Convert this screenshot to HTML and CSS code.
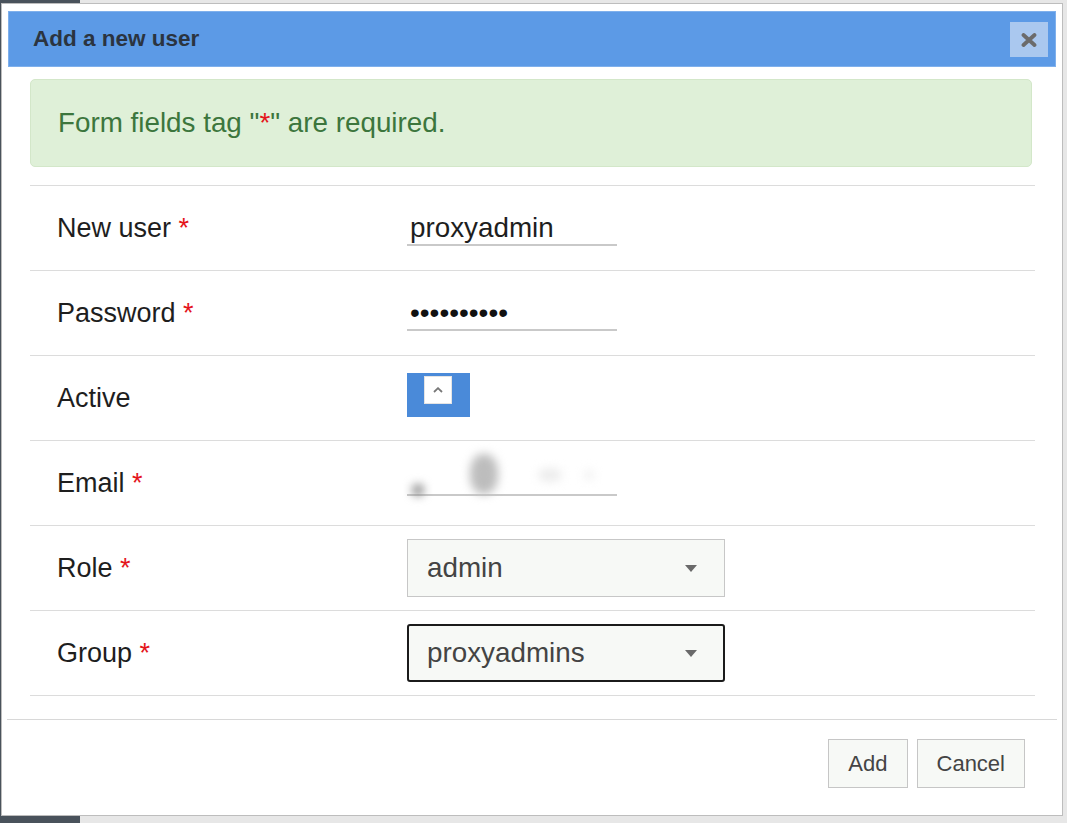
FILE: index.html
```html
<!DOCTYPE html>
<html>
    <head>
        <title>Add a new user</title>
        <link rel="stylesheet" href="styles.css">
    </head>
    <body>
        <div class="backdrop">
            <div class="sidebar"></div>
            <div class="main"></div>
        </div>

        <div class="dialog">
            <div class="dialog-head">
                <span class="dialog-title">Add a new user</span>
                <button class="close-btn" type="button" title="Close">
                    <svg width="16" height="14" viewBox="0 0 16 14"><path d="M2.5 2 L13.5 12 M13.5 2 L2.5 12" stroke="#6b6b6b" stroke-width="3.8" stroke-linecap="round"/></svg>
                </button>
            </div>

            <div class="dialog-body">
                <div class="alert">Form fields tag "<span class="req">*</span>" are required.</div>

                <div class="rows">
                    <div class="row">
                        <label class="lbl">New user <span class="req">*</span></label>
                        <div class="field"><input class="line-input" type="text" value="proxyadmin"/></div>
                    </div>
                    <div class="row">
                        <label class="lbl">Password <span class="req">*</span></label>
                        <div class="field"><input class="line-input pw" type="password" value="proxyadmin"/></div>
                    </div>
                    <div class="row">
                        <label class="lbl">Active</label>
                        <div class="field">
                            <div class="toggle">
                                <span class="knob"><svg width="10" height="6" viewBox="0 0 10 6"><path d="M1 5 L5 1.2 L9 5" fill="none" stroke="#777" stroke-width="1.8"/></svg></span>
                            </div>
                        </div>
                    </div>
                    <div class="row">
                        <label class="lbl">Email <span class="req">*</span></label>
                        <div class="field">
                            <div class="line-input hidden-mail">
                                <span class="smudge s1"></span>
                                <span class="smudge s2"></span>
                                <span class="smudge s3"></span>
                                <span class="smudge s4"></span>
                            </div>
                        </div>
                    </div>
                    <div class="row">
                        <label class="lbl">Role <span class="req">*</span></label>
                        <div class="field">
                            <div class="select">
                                <span>admin</span>
                                <svg width="12" height="7" viewBox="0 0 12 7"><path d="M0 0 H12 L6 7 Z" fill="#6a6a6a"/></svg>
                            </div>
                        </div>
                    </div>
                    <div class="row">
                        <label class="lbl">Group <span class="req">*</span></label>
                        <div class="field">
                            <div class="select focused">
                                <span>proxyadmins</span>
                                <svg width="12" height="7" viewBox="0 0 12 7"><path d="M0 0 H12 L6 7 Z" fill="#6a6a6a"/></svg>
                            </div>
                        </div>
                    </div>
                </div>
            </div>

            <div class="dialog-foot">
                <button class="btn" type="button">Add</button>
                <button class="btn" type="button">Cancel</button>
            </div>
        </div>
    </body>
</html>
```

FILE: styles.css
```css
body{margin:0px; padding:0px; font-family:"Liberation Sans", Arial, sans-serif;}
body,html{height:100%; width:100%; overflow:hidden;}

/* page behind the modal */
.backdrop{display:flex; height:100%;}
.sidebar{width:80px; background:#49525b;}
.main{flex:1; background:#e7e7e7;}

/* modal window */
.dialog{position:absolute; left:1px; top:3px; width:1048px; padding:7px 6px 7px 6px; background:#fff; border:1px solid #bdbdbd; display:flex; flex-direction:column;}

.dialog-head{height:56px; background:#5c9ae6; display:flex; align-items:center; justify-content:space-between; padding:0 7px 0 24px; border:1px solid #7fb0ec; box-sizing:border-box;}
.dialog-title{font-size:22.5px; font-weight:bold; color:#2b3440;}
.close-btn{width:38px; height:35px; border:none; background:#aac8ef; display:flex; align-items:center; justify-content:center; padding:0; margin-top:1px;}

.dialog-body{padding:0 21px 0 22px;}

.alert{margin:12px 3px 0 0; height:88px; box-sizing:border-box; background:#dff0d8; border:1px solid #d3e7c9; border-radius:5px; color:#3c763d; font-size:27.8px; display:flex; align-items:center; padding-left:27px;}
.req{color:#e4141b;}

.rows{margin-top:18px; border-top:1px solid #dcdcdc;}
.row{height:84px; border-bottom:1px solid #dcdcdc; display:flex; align-items:center;}
.lbl{width:350px; padding-left:27px; font-size:27px; color:#1e1e1e;}
.field{display:flex; align-items:center;}

.line-input{width:210px; height:34px; box-sizing:border-box; border:none; border-bottom:2px solid #c9c9c9; padding:0 0 0 3px; font-family:"Liberation Sans", Arial, sans-serif; font-size:27.8px; color:#1e1e1e; background:transparent; outline:none; margin-top:1px;}
.pw{font-size:28px; color:#111;}

.toggle{width:63px; height:44px; background:#4a8ad9; display:flex; align-items:flex-start; padding:3px 0 0 17px; box-sizing:border-box; margin-top:-6px;}
.knob{width:28px; height:28px; box-sizing:border-box; background:#fff; display:flex; align-items:center; justify-content:center; border:1px solid #e4e4e4;}

.hidden-mail{display:flex; align-items:flex-end; height:50px; margin-top:-24px;}
.smudge{display:block; border-radius:50%; filter:blur(5px);}
.s1{width:12px; height:12px; background:#888; margin-left:2px; margin-bottom:-2px;}
.s2{width:28px; height:40px; background:#bdbdbd; margin-left:46px; border-radius:45%;}
.s3{width:24px; height:14px; background:#ececec; margin-left:40px; margin-bottom:12px;}
.s4{width:10px; height:10px; background:#f0f0f0; margin-left:22px; margin-bottom:14px;}

.select{width:318px; height:58px; box-sizing:border-box; border:1px solid #c7c7c7; background:#f7f9f6; display:flex; align-items:center; justify-content:space-between; padding:0 27px 0 19px; font-size:27.8px; color:#444;}
.select.focused{border:2px solid #1b1b1b; border-radius:3px; padding-left:18px; padding-right:26px;}

.dialog-foot{margin:23px -1px 0 -1px; border-top:1px solid #d8d8d8; padding:19px 32px 20px 0; display:flex; justify-content:flex-end; gap:9px;}
.btn{height:49px; border:1px solid #c6c6c6; background:#f7f9f6; font-family:"Liberation Sans", Arial, sans-serif; font-size:22px; color:#444; padding:0 19px;}
```
